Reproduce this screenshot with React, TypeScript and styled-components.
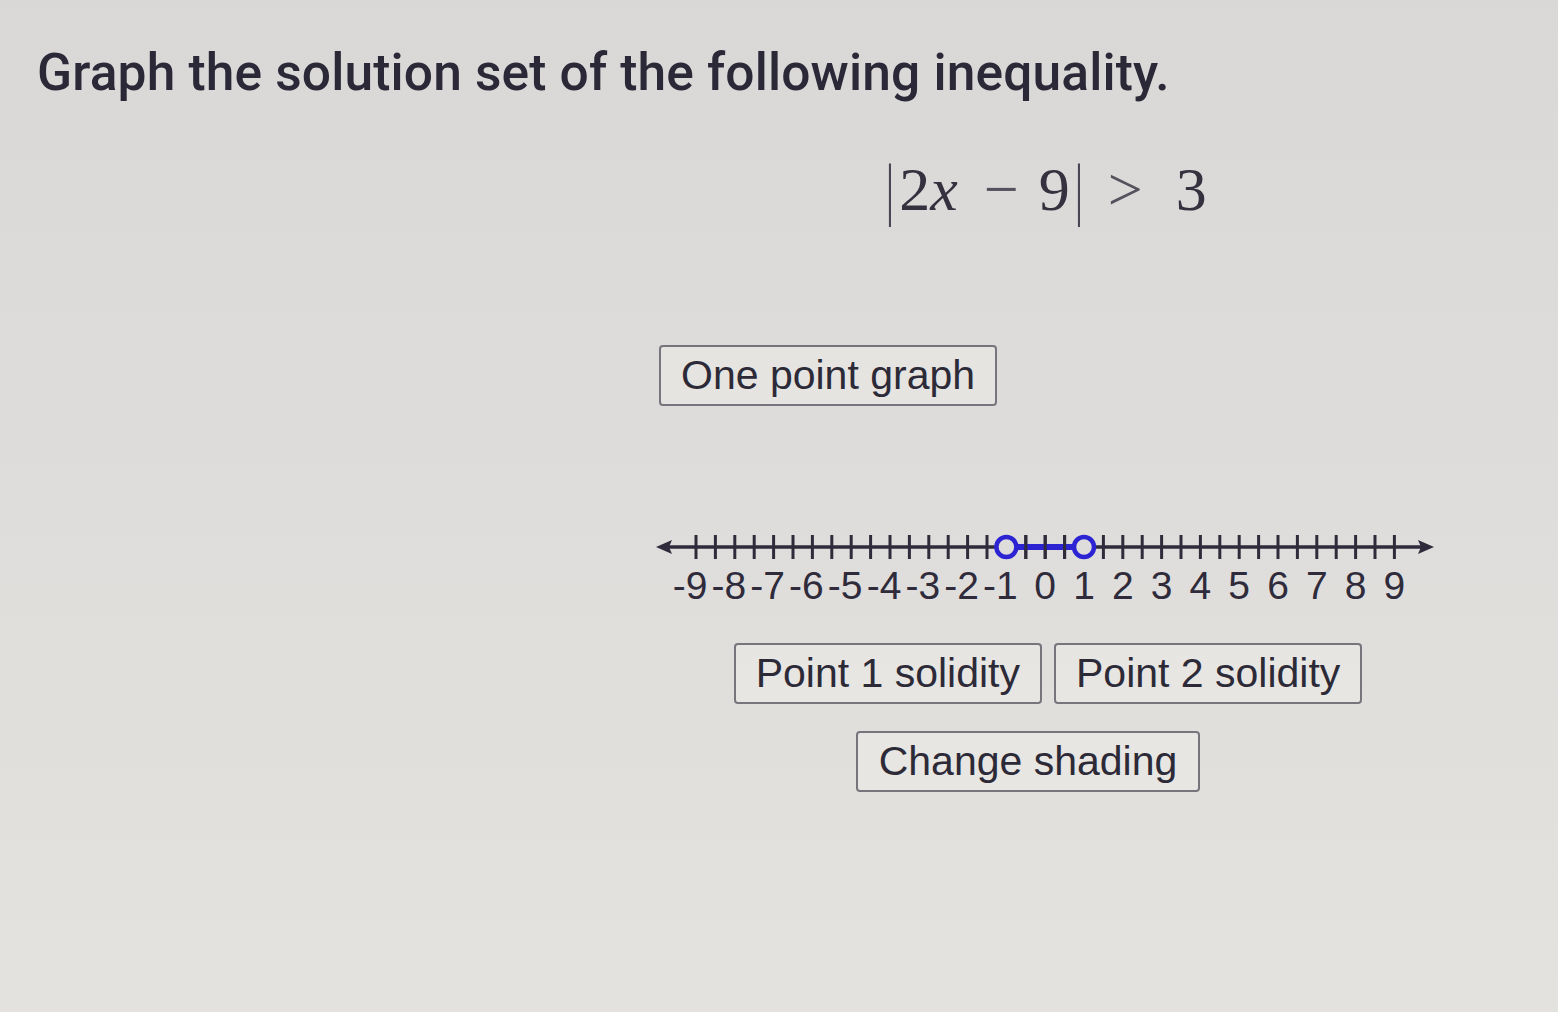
import React from "react";
import styled, { createGlobalStyle } from "styled-components";

const GlobalStyle = createGlobalStyle`
  html, body {
    margin: 0;
    padding: 0;
  }
  body {
    min-height: 1012px;
    background: linear-gradient(180deg, #d9d8d7 0%, #dedddb 50%, #e3e2de 100%);
    font-family: "Liberation Sans", Arial, sans-serif;
    color: #2d2a38;
  }
`;

const Page = styled.div`
  padding: 40px 0 0 37px;
`;

const Title = styled.h1`
  margin: 0;
  font-family: Roboto, "Liberation Sans", sans-serif;
  font-size: 51.5px;
  font-weight: 500;
  line-height: 66px;
  letter-spacing: 0.15px;
  color: #2b2937;
`;

const Workspace = styled.div`
  display: flex;
  flex-direction: column;
  width: 790px;
  margin-left: 618px;
`;

const MathLine = styled.div`
  display: flex;
  align-items: center;
  justify-content: center;
  height: 70px;
  margin-top: 48px;
  font-family: "Liberation Serif", "Times New Roman", serif;
  font-size: 62px;
  color: #35313f;
  padding-right: 10px;
`;

const Sym = styled.span<{ $gap?: number; $italic?: boolean; $thin?: boolean }>`
  margin-left: ${(p) => p.$gap ?? 0}px;
  font-style: ${(p) => (p.$italic ? "italic" : "normal")};
  color: ${(p) => (p.$thin ? "#55515d" : "inherit")};
  font-weight: 400;
`;

const Bar = styled.span<{ $gap?: number }>`
  margin-left: ${(p) => p.$gap ?? 0}px;
  font-size: 70px;
  line-height: 1;
  color: #4a4654;
  transform: scaleX(0.6);
`;

const Button = styled.button<{ $shift?: number }>`
  box-sizing: border-box;
  height: 61px;
  padding: 0 ${(p) => 20 + (p.$shift ? 1 : 0)}px;
  border: 2px solid #77757c;
  border-radius: 4px;
  background: rgba(236, 235, 232, 0.55);
  font-family: "Liberation Sans", Arial, sans-serif;
  font-size: 41px;
  color: #2d2a38;
  cursor: pointer;
  margin-right: ${(p) => p.$shift ?? 0}px;
`;

const TopButton = styled(Button)`
  align-self: flex-start;
  margin-top: 121px;
  margin-left: 4px;
`;

const LineWrap = styled.div`
  margin-top: 116px;
  height: 90px;
`;

const ButtonRow = styled.div`
  display: flex;
  justify-content: center;
  gap: 12px;
  margin-top: 31px;
  padding-right: 4px;
`;

const BottomRow = styled.div`
  display: flex;
  justify-content: center;
  margin-top: 27px;
`;

const TICK_START = 41;
const TICK_STEP = 19.4;
const LINE_Y = 25;
const INK = "#2f2b3b";
const BLUE = "#2c24d2";
const tickX = (i: number) => TICK_START + TICK_STEP * i;

const NumberLine: React.FC<{ from: number; to: number }> = ({ from, to }) => {
  const ticks = Array.from({ length: 37 }, (_, i) => i);
  const a = tickX(from);
  const b = tickX(to);
  const tick = (i: number, key: string) => (
    <line
      key={key}
      x1={tickX(i)}
      y1={LINE_Y - 12}
      x2={tickX(i)}
      y2={LINE_Y + 12}
      stroke={INK}
      strokeWidth="3"
    />
  );
  return (
    <svg width="790" height="90" viewBox="0 0 790 90">
      <line x1="8" y1={LINE_Y} x2="772" y2={LINE_Y} stroke={INK} strokeWidth="3.5" />
      <polygon points={`1,${LINE_Y} 17,${LINE_Y - 7} 14,${LINE_Y} 17,${LINE_Y + 7}`} fill={INK} />
      <polygon points={`779,${LINE_Y} 763,${LINE_Y - 7} 766,${LINE_Y} 763,${LINE_Y + 7}`} fill={INK} />
      {ticks.map((i) => tick(i, `a${i}`))}
      <line x1={a} y1={LINE_Y} x2={b} y2={LINE_Y} stroke={BLUE} strokeWidth="6" />
      {ticks.filter((i) => i > from && i < to).map((i) => tick(i, `b${i}`))}
      {[a, b].map((x) => (
        <circle key={x} cx={x} cy={LINE_Y} r="10" fill="#dedddb" stroke={BLUE} strokeWidth="4.5" />
      ))}
      {ticks
        .filter((i) => i % 2 === 0)
        .map((i) => (
          <text
            key={`l${i}`}
            x={tickX(i) - (i < 18 ? 6 : 0)}
            y="77"
            textAnchor="middle"
            fontFamily="'Liberation Sans', Arial, sans-serif"
            fontSize="39"
            fill={INK}
          >
            {i / 2 - 9}
          </text>
        ))}
    </svg>
  );
};

export default function App() {
  return (
    <>
      <GlobalStyle />
      <Page>
        <Title>Graph the solution set of the following inequality.</Title>
        <Workspace>
          <MathLine>
            <Bar>|</Bar>
            <Sym $gap={2}>2</Sym>
            <Sym $italic>x</Sym>
            <Sym $gap={26} $thin>
              −
            </Sym>
            <Sym $gap={20}>9</Sym>
            <Bar $gap={2}>|</Bar>
            <Sym $gap={22} $thin>
              &gt;
            </Sym>
            <Sym $gap={33}>3</Sym>
          </MathLine>
          <TopButton>One point graph</TopButton>
          <LineWrap>
            <NumberLine from={16} to={20} />
          </LineWrap>
          <ButtonRow>
            <Button>Point 1 solidity</Button>
            <Button>Point 2 solidity</Button>
          </ButtonRow>
          <BottomRow>
            <Button $shift={44}>Change shading</Button>
          </BottomRow>
        </Workspace>
      </Page>
    </>
  );
}
